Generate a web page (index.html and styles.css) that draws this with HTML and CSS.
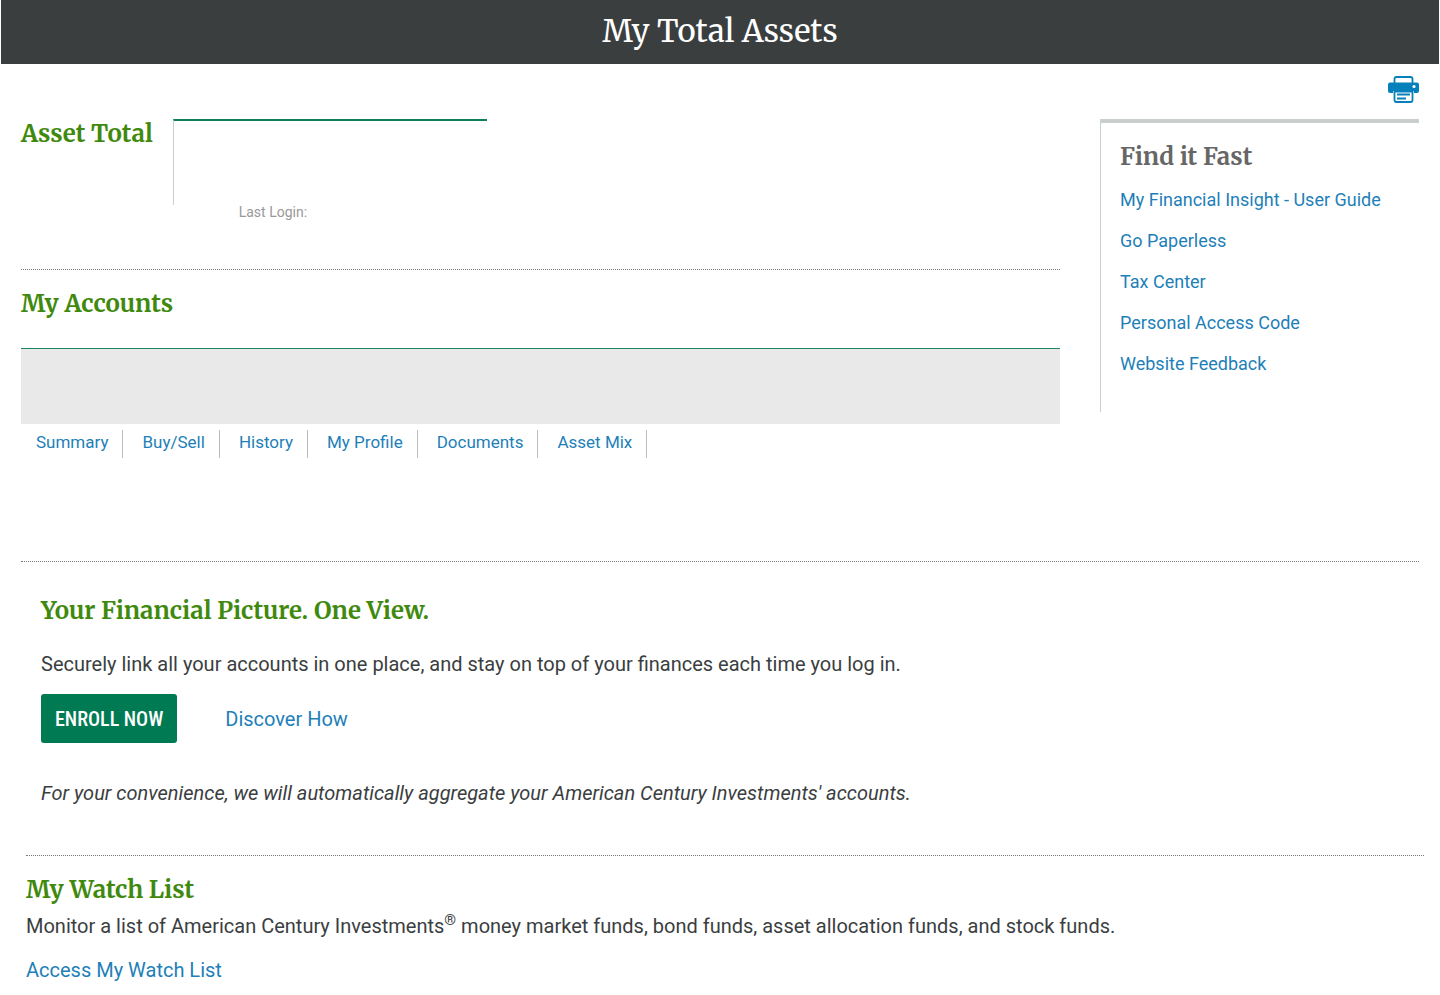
FILE: index.html
```html
<!DOCTYPE html>
<html lang="en">
<head>
    <meta charset="UTF-8">
    <meta name="viewport" content="width=device-width, initial-scale=1.0">
    <title>My Total Assets</title>
    <link rel="stylesheet" href="styles.css">
</head>
<body>
    <!-- Header -->
    <header class="page-header">
        <h1>My Total Assets</h1>
    </header>

    <main>
        <div class="toolbar">
            <button type="button" class="print-button" aria-label="Print">
                <svg width="31" height="28" viewBox="0 0 31 28">
                    <path d="M6.500 8V3Q6.500 1 8.500 1H22.500Q24.500 1 24.500 3V8" fill="none" stroke="#0680bb" stroke-width="1.800"/>
                    <path d="M2 6.500H29Q31 6.500 31 8.500V15Q31 17 29 17H26V15H5V17H2Q0 17 0 15V8.500Q0 6.500 2 6.500Z" fill="#0680bb"/>
                    <path d="M6.500 15.500H24.500V24Q24.500 26 22.500 26H8.500Q6.500 26 6.500 24Z" fill="#fff" stroke="#0680bb" stroke-width="1.800"/>
                    <path d="M9 18.500H22M9 22.500H18" stroke="#0680bb" stroke-width="1.800"/>
                    <circle cx="26" cy="10.500" r="1.600" fill="#fff"/>
                </svg>
            </button>
        </div>

        <div class="overview">
            <div class="overview-main">
                <!-- Asset Total -->
                <section class="asset-total">
                    <h2>Asset Total</h2>
                    <div class="asset-summary">
                        <div class="asset-box"></div>
                        <p class="last-login">Last Login:</p>
                    </div>
                </section>

                <!-- My Accounts -->
                <section class="accounts">
                    <h2>My Accounts</h2>
                    <div class="account-bar"></div>
                    <ul class="account-links">
                        <li><a href="#">Summary</a></li>
                        <li><a href="#">Buy/Sell</a></li>
                        <li><a href="#">History</a></li>
                        <li><a href="#">My Profile</a></li>
                        <li><a href="#">Documents</a></li>
                        <li><a href="#">Asset Mix</a></li>
                    </ul>
                </section>
            </div>

            <!-- Find it Fast -->
            <aside class="find-fast">
                <h2>Find it Fast</h2>
                <ul>
                    <li><a href="#">My Financial Insight - User Guide</a></li>
                    <li><a href="#">Go Paperless</a></li>
                    <li><a href="#">Tax Center</a></li>
                    <li><a href="#">Personal Access Code</a></li>
                    <li><a href="#">Website Feedback</a></li>
                </ul>
            </aside>
        </div>

        <!-- One View -->
        <section class="one-view">
            <h2>Your Financial Picture. One View.</h2>
            <p>Securely link all your accounts in one place, and stay on top of your finances each time you log in.</p>
            <div class="actions">
                <button type="button" class="enroll-button">ENROLL NOW</button>
                <a href="#">Discover How</a>
            </div>
            <p class="note">For your convenience, we will automatically aggregate your American Century Investments' accounts.</p>
        </section>
    </main>

    <!-- Watch List -->
    <section class="watch-list">
        <h2>My Watch List</h2>
        <p>Monitor a list of American Century Investments<sup>®</sup> money market funds, bond funds, asset allocation funds, and stock funds.</p>
        <a href="#">Access My Watch List</a>
    </section>
</body>
</html>
```
FILE: styles.css
```css
/* Global Styles */
* {
    box-sizing: border-box;
    margin: 0;
    padding: 0;
}

body {
    font-family: Roboto, Arial, sans-serif;
    font-size: 20px;
    line-height: 28px;
    background-color: #fff;
    color: #3b3e3f;
}

h1,
h2 {
    font-family: Merriweather, "Liberation Serif", serif;
}

h2 {
    font-size: 24px;
    font-weight: bold;
    line-height: 30px;
    color: #3f8a0e;
}

a {
    color: #1e7fb8;
    text-decoration: none;
}

a:hover {
    text-decoration: underline;
}

ul {
    list-style-type: none;
}

/* Header */
.page-header {
    margin: 0 1px;
    padding: 11px 20px 13px;
    background-color: #3b3e3f;
    color: #fff;
    text-align: center;
}

.page-header h1 {
    font-size: 31px;
    font-weight: normal;
    line-height: 40px;
}

main {
    padding: 12px 21px 0;
}

.toolbar {
    display: flex;
    justify-content: flex-end;
    padding-bottom: 15px;
}

.print-button {
    display: flex;
    border: none;
    background: none;
    cursor: pointer;
}

/* Overview */
.overview {
    display: flex;
    align-items: flex-start;
    gap: 40px;
    padding-bottom: 103px;
    border-bottom: 1px dotted #777;
}

.overview-main {
    flex: 1;
}

.asset-total {
    display: flex;
    gap: 20px;
    padding-bottom: 50px;
    border-bottom: 1px dotted #777;
}

.asset-summary {
    width: 314px;
}

.asset-box {
    height: 86px;
    border-top: 2px solid #0f7f5b;
    border-left: 1px solid #c9cfcf;
}

.last-login {
    padding-left: 66px;
    font-size: 14px;
    line-height: 14px;
    color: #999;
}

.accounts {
    padding-top: 19px;
}

.account-bar {
    height: 76px;
    margin-top: 29px;
    background-color: #e9e9e9;
    border-top: 1px solid #1c8562;
}

.account-links {
    display: flex;
    padding-top: 6px;
    font-size: 17px;
    line-height: 24px;
}

.account-links li {
    padding: 0 14px 4px 19px;
    border-right: 1px solid #b8bdbd;
}

.account-links li:first-child {
    padding-left: 15px;
}

/* Find it Fast */
.find-fast {
    width: 319px;
    height: 293px;
    padding: 19px 0 0 19px;
    border-top: 4px solid #c9cfcf;
    border-left: 1px solid #c9cfcf;
}

.find-fast h2 {
    color: #666;
}

.find-fast ul {
    display: flex;
    flex-direction: column;
    gap: 13px;
    padding-top: 14px;
    font-size: 18px;
}

/* One View */
.one-view {
    padding: 34px 20px 48px;
}

.one-view p {
    padding-top: 24px;
}

.actions {
    display: flex;
    align-items: center;
    gap: 48px;
    padding-top: 16px;
}

.enroll-button {
    height: 49px;
    padding: 0 14px;
    border: none;
    border-radius: 3px;
    background-color: #007a53;
    color: #fff;
    font-family: "Roboto Condensed", Roboto, Arial, sans-serif;
    font-size: 20px;
    font-weight: 500;
    cursor: pointer;
}

.one-view .note {
    padding-top: 36px;
    font-style: italic;
}

/* Watch List */
.watch-list {
    margin: 0 16px 0 26px;
    padding: 19px 0 11px;
    border-top: 1px dotted #777;
}

.watch-list p {
    padding: 7px 0 16px;
}

.watch-list sup {
    font-size: 15px;
    line-height: 1;
}
```
